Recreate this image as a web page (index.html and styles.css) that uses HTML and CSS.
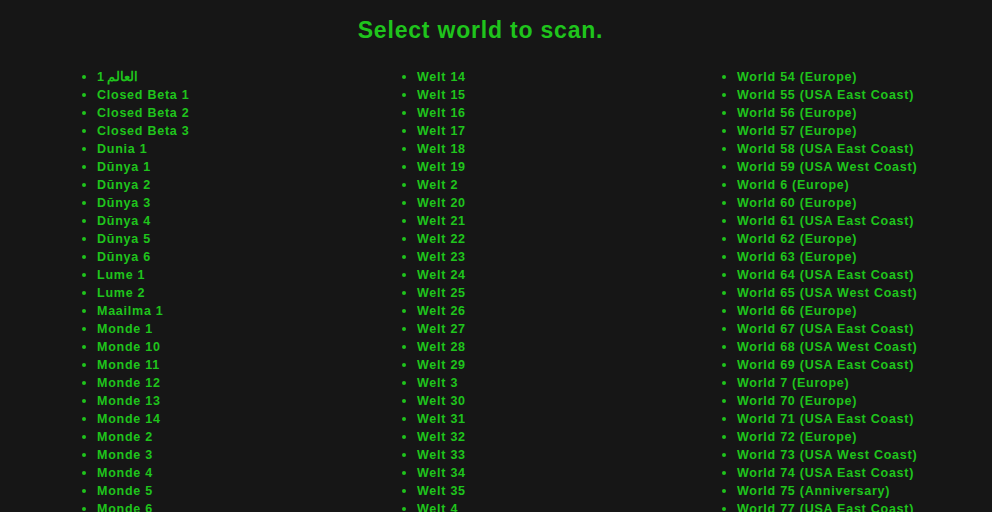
FILE: index.html
```html
<!DOCTYPE html>
<html lang="en">
<head>
<meta charset="utf-8">
<title>Select world</title>
<link rel="stylesheet" href="styles.css">
</head>
<body>
<div class="page">
  <h1 class="title">Select world to scan.</h1>
  <div class="columns">
    <ul class="worlds">
      <li>العالم 1</li>
      <li>Closed Beta 1</li>
      <li>Closed Beta 2</li>
      <li>Closed Beta 3</li>
      <li>Dunia 1</li>
      <li>Dūnya 1</li>
      <li>Dūnya 2</li>
      <li>Dūnya 3</li>
      <li>Dūnya 4</li>
      <li>Dūnya 5</li>
      <li>Dūnya 6</li>
      <li>Lume 1</li>
      <li>Lume 2</li>
      <li>Maailma 1</li>
      <li>Monde 1</li>
      <li>Monde 10</li>
      <li>Monde 11</li>
      <li>Monde 12</li>
      <li>Monde 13</li>
      <li>Monde 14</li>
      <li>Monde 2</li>
      <li>Monde 3</li>
      <li>Monde 4</li>
      <li>Monde 5</li>
      <li>Monde 6</li>
    </ul>
    <ul class="worlds">
      <li>Welt 14</li>
      <li>Welt 15</li>
      <li>Welt 16</li>
      <li>Welt 17</li>
      <li>Welt 18</li>
      <li>Welt 19</li>
      <li>Welt 2</li>
      <li>Welt 20</li>
      <li>Welt 21</li>
      <li>Welt 22</li>
      <li>Welt 23</li>
      <li>Welt 24</li>
      <li>Welt 25</li>
      <li>Welt 26</li>
      <li>Welt 27</li>
      <li>Welt 28</li>
      <li>Welt 29</li>
      <li>Welt 3</li>
      <li>Welt 30</li>
      <li>Welt 31</li>
      <li>Welt 32</li>
      <li>Welt 33</li>
      <li>Welt 34</li>
      <li>Welt 35</li>
      <li>Welt 4</li>
    </ul>
    <ul class="worlds">
      <li>World 54 (Europe)</li>
      <li>World 55 (USA East Coast)</li>
      <li>World 56 (Europe)</li>
      <li>World 57 (Europe)</li>
      <li>World 58 (USA East Coast)</li>
      <li>World 59 (USA West Coast)</li>
      <li>World 6 (Europe)</li>
      <li>World 60 (Europe)</li>
      <li>World 61 (USA East Coast)</li>
      <li>World 62 (Europe)</li>
      <li>World 63 (Europe)</li>
      <li>World 64 (USA East Coast)</li>
      <li>World 65 (USA West Coast)</li>
      <li>World 66 (Europe)</li>
      <li>World 67 (USA East Coast)</li>
      <li>World 68 (USA West Coast)</li>
      <li>World 69 (USA East Coast)</li>
      <li>World 7 (Europe)</li>
      <li>World 70 (Europe)</li>
      <li>World 71 (USA East Coast)</li>
      <li>World 72 (Europe)</li>
      <li>World 73 (USA West Coast)</li>
      <li>World 74 (USA East Coast)</li>
      <li>World 75 (Anniversary)</li>
      <li>World 77 (USA East Coast)</li>
    </ul>
  </div>
</div>
</body>
</html>
```

FILE: styles.css
```css
html, body {
  margin: 0;
  padding: 0;
  background: #161616;
}

body {
  color: #1fc41c;
  font-family: "Liberation Sans", "Noto Sans", sans-serif;
}

.page {
  width: 961px;
}

.title {
  margin: 17px 0 0;
  text-align: center;
  font-size: 23px;
  line-height: 26px;
  font-weight: bold;
  letter-spacing: 0.8px;
}

.columns {
  display: grid;
  grid-template-columns: repeat(3, 320px);
  margin-top: 25px;
}

.worlds {
  margin: 0;
  padding-left: 97px;
  list-style: none;
  font-size: 12.5px;
  line-height: 18px;
  font-weight: bold;
  letter-spacing: 0.75px;
}

.worlds li {
  position: relative;
  white-space: nowrap;
}

.worlds li::before {
  content: "";
  position: absolute;
  left: -15px;
  top: 7px;
  width: 4px;
  height: 4px;
  border-radius: 50%;
  background: #1fc41c;
}
```
